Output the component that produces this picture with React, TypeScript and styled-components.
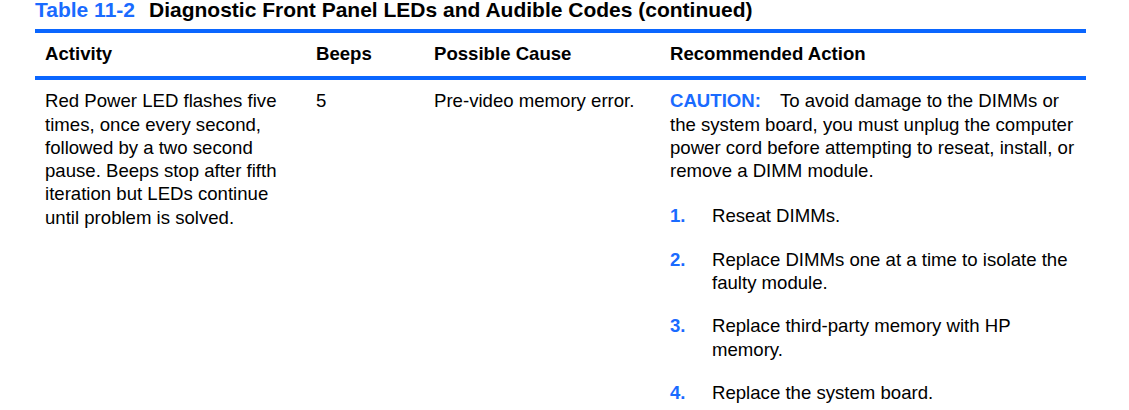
import React from "react";
import styled, { createGlobalStyle } from "styled-components";

const Global = createGlobalStyle`
  html, body { margin: 0; padding: 0; background: #fff; }
  body { font-family: "Liberation Sans", Arial, sans-serif; color: #000; }
  *, *::before, *::after { box-sizing: border-box; }
`;

const BLUE = "#0a66ff";
const TEXT_BLUE = "#1a6bff";

const Page = styled.div`
  padding: 0 0 0 35px;
  width: 1086px;
`;

const Title = styled.h1`
  margin: 0 0 9px;
  font-size: 21px;
  line-height: 20px;
  font-weight: 700;
`;

const TitleNum = styled.span`
  color: ${TEXT_BLUE};
  margin-right: 14px;
`;

const Table = styled.table`
  width: 1051px;
  border-collapse: collapse;
  table-layout: fixed;
  font-size: 18.6px;
  line-height: 23.3px;
`;

const HeadRow = styled.tr`
  border-top: 4px solid ${BLUE};
  border-bottom: 4px solid ${BLUE};
`;

const HeadCell = styled.th<{ $w: number }>`
  width: ${(p) => p.$w}px;
  text-align: left;
  font-weight: 700;
  padding: 9px 10px 11px;
  vertical-align: top;
`;

const Cell = styled.td`
  padding: 9px 10px 0;
  vertical-align: top;
`;

const Caution = styled.p`
  margin: 0 0 22px;
`;

const CautionLabel = styled.span`
  color: ${TEXT_BLUE};
  font-weight: 700;
  margin-right: 19px;
`;

const Steps = styled.ol`
  list-style: none;
  margin: 0;
  padding: 0;
`;

const Step = styled.li`
  display: flex;
  margin-bottom: 20px;
`;

const StepNum = styled.span`
  flex: 0 0 42px;
  color: ${TEXT_BLUE};
  font-weight: 700;
`;

const StepText = styled.span`
  flex: 1;
`;

const steps = [
  "Reseat DIMMs.",
  "Replace DIMMs one at a time to isolate the faulty module.",
  "Replace third-party memory with HP memory.",
  "Replace the system board.",
];

export default function App() {
  return (
    <Page>
      <Global />
      <Title>
        <TitleNum>Table 11-2</TitleNum>
        Diagnostic Front Panel LEDs and Audible Codes (continued)
      </Title>
      <Table>
        <thead>
          <HeadRow>
            <HeadCell $w={271}>Activity</HeadCell>
            <HeadCell $w={118}>Beeps</HeadCell>
            <HeadCell $w={236}>Possible Cause</HeadCell>
            <HeadCell $w={426}>Recommended Action</HeadCell>
          </HeadRow>
        </thead>
        <tbody>
          <tr>
            <Cell>
              Red Power LED flashes five times, once every second, followed by a
              two second pause. Beeps stop after fifth iteration but LEDs
              continue until problem is solved.
            </Cell>
            <Cell>5</Cell>
            <Cell>Pre-video memory error.</Cell>
            <Cell>
              <Caution>
                <CautionLabel>CAUTION:</CautionLabel>To avoid damage to the
                DIMMs or the system board, you must unplug the computer power
                cord before attempting to reseat, install, or remove a DIMM
                module.
              </Caution>
              <Steps>
                {steps.map((s, i) => (
                  <Step key={i}>
                    <StepNum>{i + 1}.</StepNum>
                    <StepText>{s}</StepText>
                  </Step>
                ))}
              </Steps>
            </Cell>
          </tr>
        </tbody>
      </Table>
    </Page>
  );
}
